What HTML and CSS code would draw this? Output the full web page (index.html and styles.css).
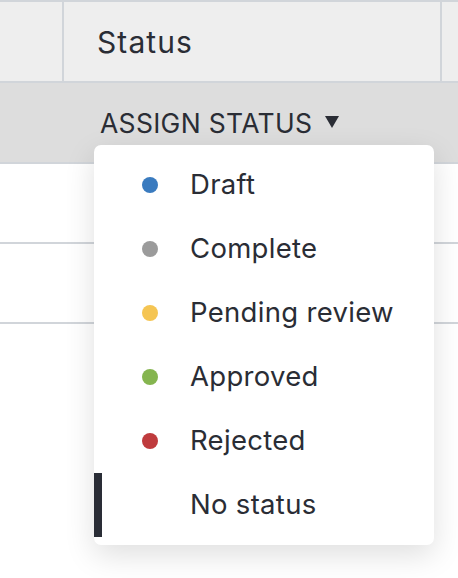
FILE: index.html
```html
<!DOCTYPE html>
<html>
<head>
<meta charset="utf-8">
<link rel="stylesheet" href="styles.css">
</head>
<body>
<div class="table">
  <div class="row head">
    <div class="cell c1"></div>
    <div class="cell c2"><span class="head-text">Status</span></div>
    <div class="cell c3"></div>
  </div>
  <div class="row assign">
    <div class="assign-btn">ASSIGN STATUS <span class="caret"></span></div>
  </div>
  <div class="row body"></div>
  <div class="row body"></div>
</div>
<div class="menu">
  <div class="item"><span class="dot blue"></span><span class="label">Draft</span></div>
  <div class="item"><span class="dot gray"></span><span class="label">Complete</span></div>
  <div class="item"><span class="dot yellow"></span><span class="label">Pending review</span></div>
  <div class="item"><span class="dot green"></span><span class="label">Approved</span></div>
  <div class="item"><span class="dot red"></span><span class="label">Rejected</span></div>
  <div class="item active"><span class="dot none"></span><span class="label">No status</span></div>
</div>
</body>
</html>
```
FILE: styles.css
```css
html, body {
  margin: 0;
  padding: 0;
  background: #ffffff;
  font-family: Inter, "Noto Sans", sans-serif;
  color: #2a2d35;
}
.table {
  width: 458px;
  overflow: hidden;
}
.row {
  display: flex;
  border-bottom: 2px solid #d1d5da;
}
.head {
  border-top: 2px solid #d1d5da;
  height: 79px;
  background: #eeeeee;
}
.cell {
  display: flex;
  align-items: center;
}
.c1 { width: 62px; border-right: 2px solid #d1d5da; }
.c2 { width: 343px; padding-left: 33px; border-right: 2px solid #d1d5da; }
.c3 { flex: 1; }
.head-text {
  font-size: 30px;
  letter-spacing: 1.1px;
}
.assign {
  height: 79px;
  background: #dddddd;
  align-items: center;
}
.assign-btn {
  margin-left: 100px;
  font-size: 26.5px;
  letter-spacing: 0.3px;
  display: flex;
  align-items: center;
}
.caret {
  display: inline-block;
  width: 0;
  height: 0;
  margin-left: 13px;
  margin-top: -2px;
  border-left: 7.5px solid transparent;
  border-right: 7.5px solid transparent;
  border-top: 12px solid #2a2d35;
}
.body {
  height: 78px;
}
.menu {
  position: absolute;
  left: 94px;
  top: 145px;
  width: 340px;
  padding: 8px 0;
  background: #ffffff;
  border-radius: 7px;
  box-shadow: 0 10px 30px rgba(0, 0, 0, 0.13);
  overflow: hidden;
}
.item {
  height: 64px;
  display: flex;
  align-items: center;
  padding-left: 48px;
  position: relative;
}
.item.active::before {
  content: "";
  position: absolute;
  left: 0;
  top: 0;
  bottom: 0;
  width: 8px;
  background: #2a2d36;
}
.dot {
  width: 16px;
  height: 16px;
  border-radius: 50%;
  flex: none;
}
.blue { background: #3a7bbf; }
.gray { background: #9b9b9b; }
.yellow { background: #f5c553; }
.green { background: #85b54f; }
.red { background: #bf3b3d; }
.none { background: transparent; }
.label {
  margin-left: 32px;
  margin-top: -3px;
  font-size: 27.5px;
  letter-spacing: 0.3px;
}
```
